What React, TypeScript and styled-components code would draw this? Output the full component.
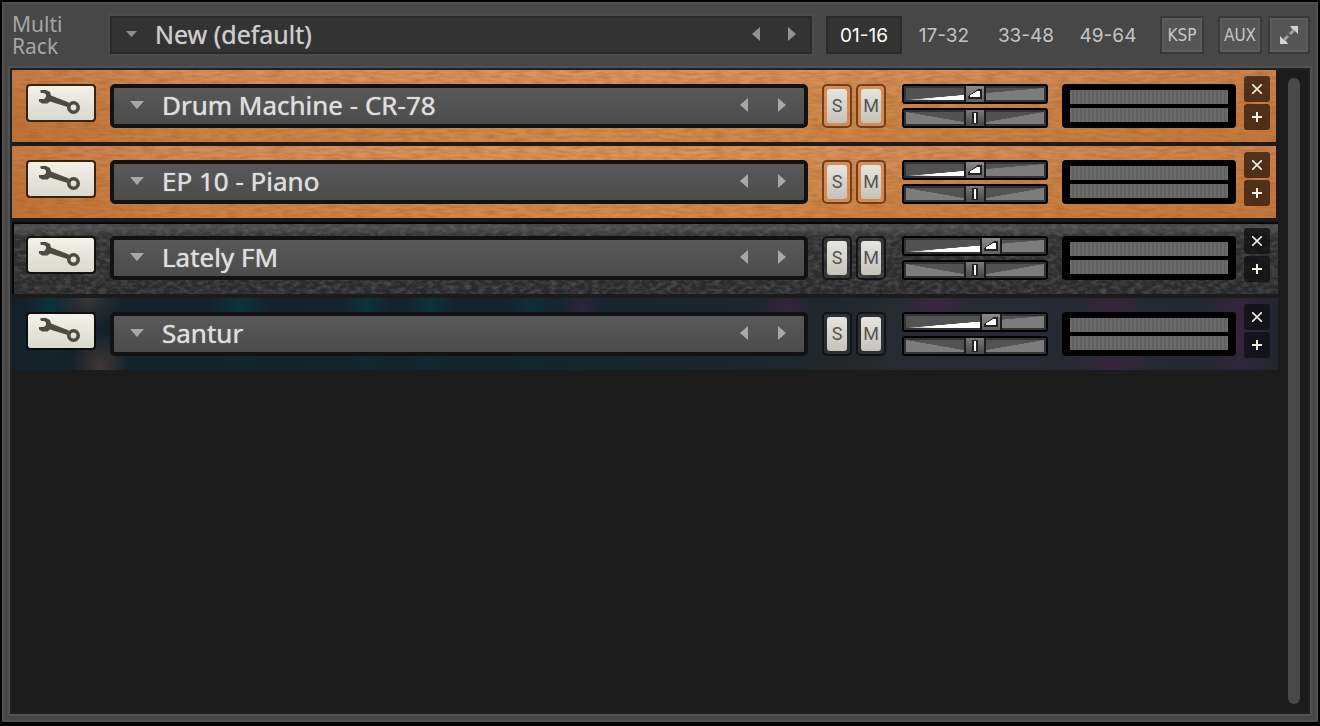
import React, { useState } from "react";
import styled, { createGlobalStyle, css } from "styled-components";

type Skin = "wood" | "leather" | "aurora";

interface Instrument {
  name: string;
  skin: Skin;
  volume: number;
}

const instruments: Instrument[] = [
  { name: "Drum Machine - CR-78", skin: "wood", volume: 50 },
  { name: "EP 10 - Piano", skin: "wood", volume: 50 },
  { name: "Lately FM", skin: "leather", volume: 63 },
  { name: "Santur", skin: "aurora", volume: 63 },
];

const pages = ["01-16", "17-32", "33-48", "49-64"];

const GlobalStyle = createGlobalStyle`
  *, *::before, *::after { box-sizing: border-box; }
  body { margin: 0; background: #000; font-family: "Noto Sans", sans-serif; }
  button, select, input { font: inherit; margin: 0; padding: 0; border: 0; border-radius: 0; }
  button { cursor: pointer; }
`;

const Frame = styled.main`
  display: flex;
  flex-direction: column;
  min-height: 100vh;
  border: 2px solid #000;
  border-bottom-width: 4px;
`;

const Panel = styled.div`
  flex: 1;
  display: flex;
  flex-direction: column;
  background: #474747;
  border: 2px solid #515151;
  padding: 0 4px 4px;
`;

const Header = styled.header`
  display: flex;
  align-items: center;
  height: 62px;
  padding: 0 2px 0 4px;
`;

const Title = styled.h1`
  width: 98px;
  margin: 0;
  font-size: 21px;
  font-weight: 400;
  line-height: 22px;
  color: #a6a6a6;
`;

const HeaderPicker = styled.div`
  flex: 1;
  display: flex;
  align-items: center;
  height: 38px;
  padding: 0 0 2px 14px;
  background: #333;
  border: 2px solid #2a2a2a;
  outline: 2px solid #4c4c4c;
`;

const PickerSelect = styled.select<{ $bright?: boolean }>`
  flex: 1;
  min-width: 0;
  height: 36px;
  margin-left: 18px;
  appearance: none;
  background: transparent;
  outline: none;
  font-size: ${(p) => (p.$bright ? 26 : 25)}px;
  line-height: 36px;
  color: ${(p) => (p.$bright ? "#dedede" : "#cecece")};
  text-shadow: 0 0 1px ${(p) => (p.$bright ? "#dedede" : "#9a9a9a")};
`;

const StepButton = styled.button<{ $bright?: boolean }>`
  display: flex;
  align-items: center;
  justify-content: center;
  width: ${(p) => (p.$bright ? 38 : 36)}px;
  height: 30px;
  background: transparent;
  color: ${(p) => (p.$bright ? "#a8a8a8" : "#929292")};
`;

const PageTabs = styled.nav`
  display: flex;
  margin: 0 12px 0 14px;
  gap: 2px;
`;

const PageTab = styled.button<{ $active: boolean }>`
  min-width: ${(p) => (p.$active ? 76 : 80)}px;
  height: 38px;
  font-family: Inter, sans-serif;
  font-size: 19px;
  color: ${(p) => (p.$active ? "#fff" : "#c4c4c4")};
  background: ${(p) => (p.$active ? "#333" : "transparent")};
  border: 2px solid ${(p) => (p.$active ? "#2a2a2a" : "transparent")};
`;

const ToolButtons = styled.div`
  display: flex;
  gap: 6px;
`;

const ToolButton = styled.button<{ $spaced?: boolean }>`
  display: flex;
  align-items: center;
  justify-content: center;
  width: ${(p) => (p.$spaced ? 44 : 42)}px;
  height: 38px;
  background: #555;
  border: 2px solid #393939;
  box-shadow: inset 0 0 0 2px #5c5c5c;
  font-family: "DejaVu Sans Condensed", "DejaVu Sans Mono", sans-serif;
  font-size: 17px;
  color: #c6c6c6;
  &:first-child { margin-right: 8px; }
`;

const Rack = styled.section`
  flex: 1;
  display: flex;
  background: #1b1b1b;
  border: 2px solid #212121;
  outline: 2px solid #515151;
  margin: 2px;
`;

const RackList = styled.ul`
  flex: 1;
  display: flex;
  flex-direction: column;
  gap: 4px;
  margin: 0;
  padding: 0;
  list-style: none;
`;

const skins = {
  wood: css`
    margin-right: 2px;
    background: linear-gradient(90deg, rgba(170, 80, 30, 0.3), transparent 14%, rgba(240, 175, 110, 0.25) 48%, transparent 75%, rgba(180, 95, 40, 0.25)),
      linear-gradient(#d4905f, #cb8548 55%, #cb8243);
  `,
  leather: css`
    background: linear-gradient(#3c3c3c, #4c4c4c 8%, #303030 20%, #2a2a2a);
  `,
  aurora: css`
    background:
      radial-gradient(30px 34px at 7% 95%, rgba(110, 75, 65, 0.5), transparent),
      radial-gradient(34px 30px at 6% 0%, rgba(90, 75, 70, 0.5), transparent),
      radial-gradient(24px 60px at 3% 10%, rgba(8, 62, 74, 0.6), transparent),
      radial-gradient(30px 70px at 18% 10%, rgba(8, 62, 70, 0.6), transparent),
      radial-gradient(24px 80px at 28% 10%, rgba(8, 62, 70, 0.6), transparent),
      radial-gradient(24px 80px at 33% 10%, rgba(8, 62, 70, 0.6), transparent),
      radial-gradient(24px 80px at 41% 10%, rgba(8, 62, 70, 0.4), transparent),
      radial-gradient(24px 60px at 45% 10%, rgba(70, 35, 70, 0.5), transparent),
      radial-gradient(30px 50px at 61% 10%, rgba(80, 30, 80, 0.4), transparent),
      radial-gradient(30px 40px at 73% 5%, rgba(85, 30, 85, 0.4), transparent),
      radial-gradient(30px 40px at 87% 5%, rgba(85, 30, 75, 0.4), transparent),
      radial-gradient(36px 90px at 97% 40%, rgba(75, 30, 80, 0.5), transparent),
      radial-gradient(40px 20px at 87% 95%, rgba(85, 30, 80, 0.4), transparent),
      linear-gradient(90deg, #14212a, #13242c 40%, #20282d 65%, #292b33 72%, #22272f);
  `,
};

const Row = styled.li<{ $skin: Skin }>`
  position: relative;
  display: flex;
  align-items: flex-start;
  height: 72px;
  padding: 14px ${(p) => (p.$skin === "wood" ? 6 : 8)}px 14px 14px;
  ${(p) => skins[p.$skin]}
`;

const Grain = styled.svg<{ $edge: boolean }>`
  position: absolute;
  inset: 0;
  width: 100%;
  height: 100%;
  border: 0 solid #050505;
  border-width: ${(p) => (p.$edge ? "2px 0 0 2px" : "0")};
  pointer-events: none;
`;

const EditButton = styled.button`
  position: relative;
  display: flex;
  align-items: center;
  justify-content: center;
  width: 70px;
  height: 38px;
  margin-right: 14px;
  border: 2px solid rgba(12, 6, 2, 0.75);
  border-radius: 4px;
  background: linear-gradient(#f2f2e9, #d9d9ce) padding-box;
`;

const NamePlate = styled.div`
  position: relative;
  flex: 1;
  min-width: 0;
  display: flex;
  align-items: center;
  height: 44px;
  padding: 0 3px 2px 16px;
  border: 4px solid #121212;
  border-radius: 5px;
  background: linear-gradient(#595959, #4b4b4b);
`;

const ToggleGroup = styled.div`
  position: relative;
  display: flex;
  gap: 4px;
  margin: 0 16px 0 14px;
`;

const Toggle = styled.button<{ $skin: Skin }>`
  width: 30px;
  height: 44px;
  border: 2px solid ${(p) => (p.$skin === "wood" ? "rgba(70, 30, 5, 0.7)" : "rgba(12, 14, 16, 0.85)")};
  border-radius: 5px;
  background: ${(p) => (p.$skin === "wood" ? "rgba(225, 145, 90, 0.6)" : "rgba(60, 66, 70, 0.35)")};
`;

const ToggleCap = styled.span`
  display: block;
  width: 20px;
  height: 34px;
  margin: 0 auto;
  border-radius: 3px;
  background: linear-gradient(#e6e4df, #c6c3bb);
  font-family: Roboto, sans-serif;
  font-size: 18px;
  line-height: 34px;
  text-align: center;
  color: #555;
`;

const SliderStack = styled.div`
  position: relative;
  display: flex;
  flex-direction: column;
  gap: 4px;
  margin-right: 14px;
`;

const sliderBase = css`
  display: block;
  width: 146px;
  height: 20px;
  appearance: none;
  border: 2px solid #000;
  border-radius: 3px;
  outline: none;
  &::-webkit-slider-thumb {
    appearance: none;
    width: 22px;
    height: 16px;
    border: solid #1c1c1c;
    border-width: 0 2px;
  }
`;

const VolumeSlider = styled.input<{ $level: number }>`
  ${sliderBase}
  background:
    linear-gradient(to bottom right, #525252 49%, transparent 51%) center / calc(100% - 4px) calc(100% - 4px) no-repeat,
    linear-gradient(to right, #8a8a8a, #fff 20%, #fff ${(p) => p.$level}%, #7c7c7c ${(p) => p.$level}%) center / calc(100% - 4px) calc(100% - 4px) no-repeat,
    #333;
  &::-webkit-slider-thumb {
    background:
      linear-gradient(to bottom right, transparent 34%, #fff 38%) 4px 5px / 10px 6px no-repeat,
      linear-gradient(to bottom right, transparent 34%, #222 38%) 2px 3px / 14px 10px no-repeat,
      linear-gradient(#8a8a8a, #606060);
  }
`;

const PanSlider = styled.input`
  ${sliderBase}
  background:
    linear-gradient(to bottom left, #525252 49%, #7c7c7c 51%) 2px center / calc(50% - 2px) calc(100% - 4px) no-repeat,
    linear-gradient(to bottom right, #525252 49%, #7c7c7c 51%) right 2px center / calc(50% - 2px) calc(100% - 4px) no-repeat,
    #333;
  &::-webkit-slider-thumb {
    background:
      linear-gradient(#fff, #fff) 8px 3px / 2px 10px no-repeat,
      linear-gradient(#222, #222) 6px 2px / 6px 12px no-repeat,
      linear-gradient(#7a7a7a, #454545);
  }
`;

const Meter = styled.div`
  position: relative;
  display: flex;
  flex-direction: column;
  gap: 4px;
  width: 174px;
  height: 44px;
  margin-right: 8px;
  padding: 6px 8px;
  border-radius: 4px;
  background: #000;
`;

const MeterBar = styled.div`
  height: 14px;
  background: repeating-linear-gradient(90deg, #6b6b6b 0 2px, #616161 2px 4px);
`;

const RowActions = styled.div`
  position: relative;
  display: flex;
  flex-direction: column;
  gap: 2px;
  margin-top: -8px;
`;

const RowAction = styled.button<{ $skin: Skin }>`
  display: flex;
  align-items: center;
  justify-content: center;
  width: 26px;
  height: 26px;
  border-radius: 3px;
  color: #f1eee4;
  background: ${(p) => (p.$skin === "wood" ? "rgba(42, 24, 14, 0.75)" : "rgba(14, 14, 16, 0.75)")};
`;

const ScrollTrack = styled.div`
  width: 30px;
  display: flex;
  padding: 8px 8px 8px 10px;
`;

const ScrollThumb = styled.div`
  width: 12px;
  border-radius: 6px;
  background: #484848;
`;

const FilterDefs = styled.svg`
  position: absolute;
`;

const TextureFilters = () => (
  <FilterDefs width="0" height="0" aria-hidden="true">
    <filter id="grain-wood" x="0" y="0" width="100%" height="100%" colorInterpolationFilters="sRGB">
      <feTurbulence type="fractalNoise" baseFrequency="0.07 0.35" numOctaves={4} seed={4} />
      <feColorMatrix values="0 0 0 0 0.62  0 0 0 0 0.34  0 0 0 0 0.12  0.8 0 0 0 -0.26" />
    </filter>
    <filter id="grain-leather" x="0" y="0" width="100%" height="100%" colorInterpolationFilters="sRGB">
      <feTurbulence type="fractalNoise" baseFrequency="0.14 0.26" numOctaves={3} seed={9} />
      <feColorMatrix values="0 0 0 0 0.45  0 0 0 0 0.45  0 0 0 0 0.45  1 0 0 0 -0.38" />
    </filter>
  </FilterDefs>
);

const RowGrain = ({ skin }: { skin: Skin }) =>
  skin === "aurora" ? null : (
    <Grain $edge={skin === "leather"} aria-hidden="true">
      <rect width="100%" height="100%" filter={`url(#grain-${skin})`} />
    </Grain>
  );

const Caret = ({ small }: { small?: boolean }) => (
  <svg width={small ? 11 : 14} height={small ? 6 : 8} viewBox="0 0 14 8" preserveAspectRatio="none" aria-hidden="true">
    <path d="M0 0H14L7 8Z" fill={small ? "#8f8f8f" : "#a8a8a8"} />
  </svg>
);

const Arrow = ({ back }: { back?: boolean }) => (
  <svg width="8" height="14" viewBox="0 0 8 14" aria-hidden="true">
    <path d={back ? "M8 0V14L0 7Z" : "M0 0V14L8 7Z"} fill="currentColor" />
  </svg>
);

const Wrench = () => (
  <svg width="44" height="28" viewBox="0 0 44 28" aria-hidden="true">
    <path d="M1 1.500L3 1H7L11 3L12 6.500L30 13.500L28.500 18L11 12.500L8.500 14.500H3L0 12.500V10H5L7 8V5.500L5 4H2Z" fill="#4c4c44" />
    <circle cx="34.500" cy="18.500" r="4.700" fill="none" stroke="#4c4c44" strokeWidth="3.600" />
  </svg>
);

const Expand = () => (
  <svg width="20" height="20" viewBox="0 0 20 20" aria-hidden="true">
    <path d="M11 1H19V9L16 6L13 4ZM1 11L4 14L7 16L9 19H1Z" fill="#d2d2d2" />
    <path d="M15 5L11 9M9 11L5 15" stroke="#a2a2a2" strokeWidth="3" />
  </svg>
);

const Cross = () => (
  <svg width="10" height="10" viewBox="0 0 10 10" aria-hidden="true">
    <path d="M0 0L10 10M10 0L0 10" stroke="currentColor" strokeWidth="1.600" />
  </svg>
);

const Plus = () => (
  <svg width="10" height="10" viewBox="0 0 10 10" aria-hidden="true">
    <path d="M5 0V10M0 5H10" stroke="currentColor" strokeWidth="2" />
  </svg>
);

const InstrumentRow = ({ name, skin, volume }: Instrument) => {
  const [level, setLevel] = useState(volume);
  return (
    <Row $skin={skin}>
      <RowGrain skin={skin} />
      <EditButton aria-label={`Edit ${name}`}>
        <Wrench />
      </EditButton>
      <NamePlate>
        <Caret />
        <PickerSelect $bright aria-label="Instrument">
          <option>{name}</option>
        </PickerSelect>
        <StepButton $bright aria-label="Previous instrument"><Arrow back /></StepButton>
        <StepButton $bright aria-label="Next instrument"><Arrow /></StepButton>
      </NamePlate>
      <ToggleGroup>
        <Toggle $skin={skin} aria-label="Solo"><ToggleCap>S</ToggleCap></Toggle>
        <Toggle $skin={skin} aria-label="Mute"><ToggleCap>M</ToggleCap></Toggle>
      </ToggleGroup>
      <SliderStack>
        <VolumeSlider type="range" aria-label="Volume" $level={level} value={level} onChange={(e) => setLevel(Number(e.target.value))} />
        <PanSlider type="range" aria-label="Pan" defaultValue={50} />
      </SliderStack>
      <Meter>
        <MeterBar />
        <MeterBar />
      </Meter>
      <RowActions>
        <RowAction $skin={skin} aria-label={`Remove ${name}`}><Cross /></RowAction>
        <RowAction $skin={skin} aria-label={`Expand ${name}`}><Plus /></RowAction>
      </RowActions>
    </Row>
  );
};

export default function App() {
  const [page, setPage] = useState(0);
  return (
    <Frame>
      <GlobalStyle />
      <TextureFilters />
      <Panel>
        <Header>
          <Title>Multi<br />Rack</Title>
          <HeaderPicker>
            <Caret small />
            <PickerSelect aria-label="Multi">
              <option>New (default)</option>
            </PickerSelect>
            <StepButton aria-label="Previous multi"><Arrow back /></StepButton>
            <StepButton aria-label="Next multi"><Arrow /></StepButton>
          </HeaderPicker>
          <PageTabs>
            {pages.map((label, i) => (
              <PageTab key={label} $active={i === page} onClick={() => setPage(i)}>{label}</PageTab>
            ))}
          </PageTabs>
          <ToolButtons>
            <ToolButton $spaced>KSP</ToolButton>
            <ToolButton $spaced>AUX</ToolButton>
            <ToolButton aria-label="Minimise rack"><Expand /></ToolButton>
          </ToolButtons>
        </Header>
        <Rack>
          <RackList>
            {instruments.map((item) => (
              <InstrumentRow key={item.name} {...item} />
            ))}
          </RackList>
          <ScrollTrack><ScrollThumb /></ScrollTrack>
        </Rack>
      </Panel>
    </Frame>
  );
}
